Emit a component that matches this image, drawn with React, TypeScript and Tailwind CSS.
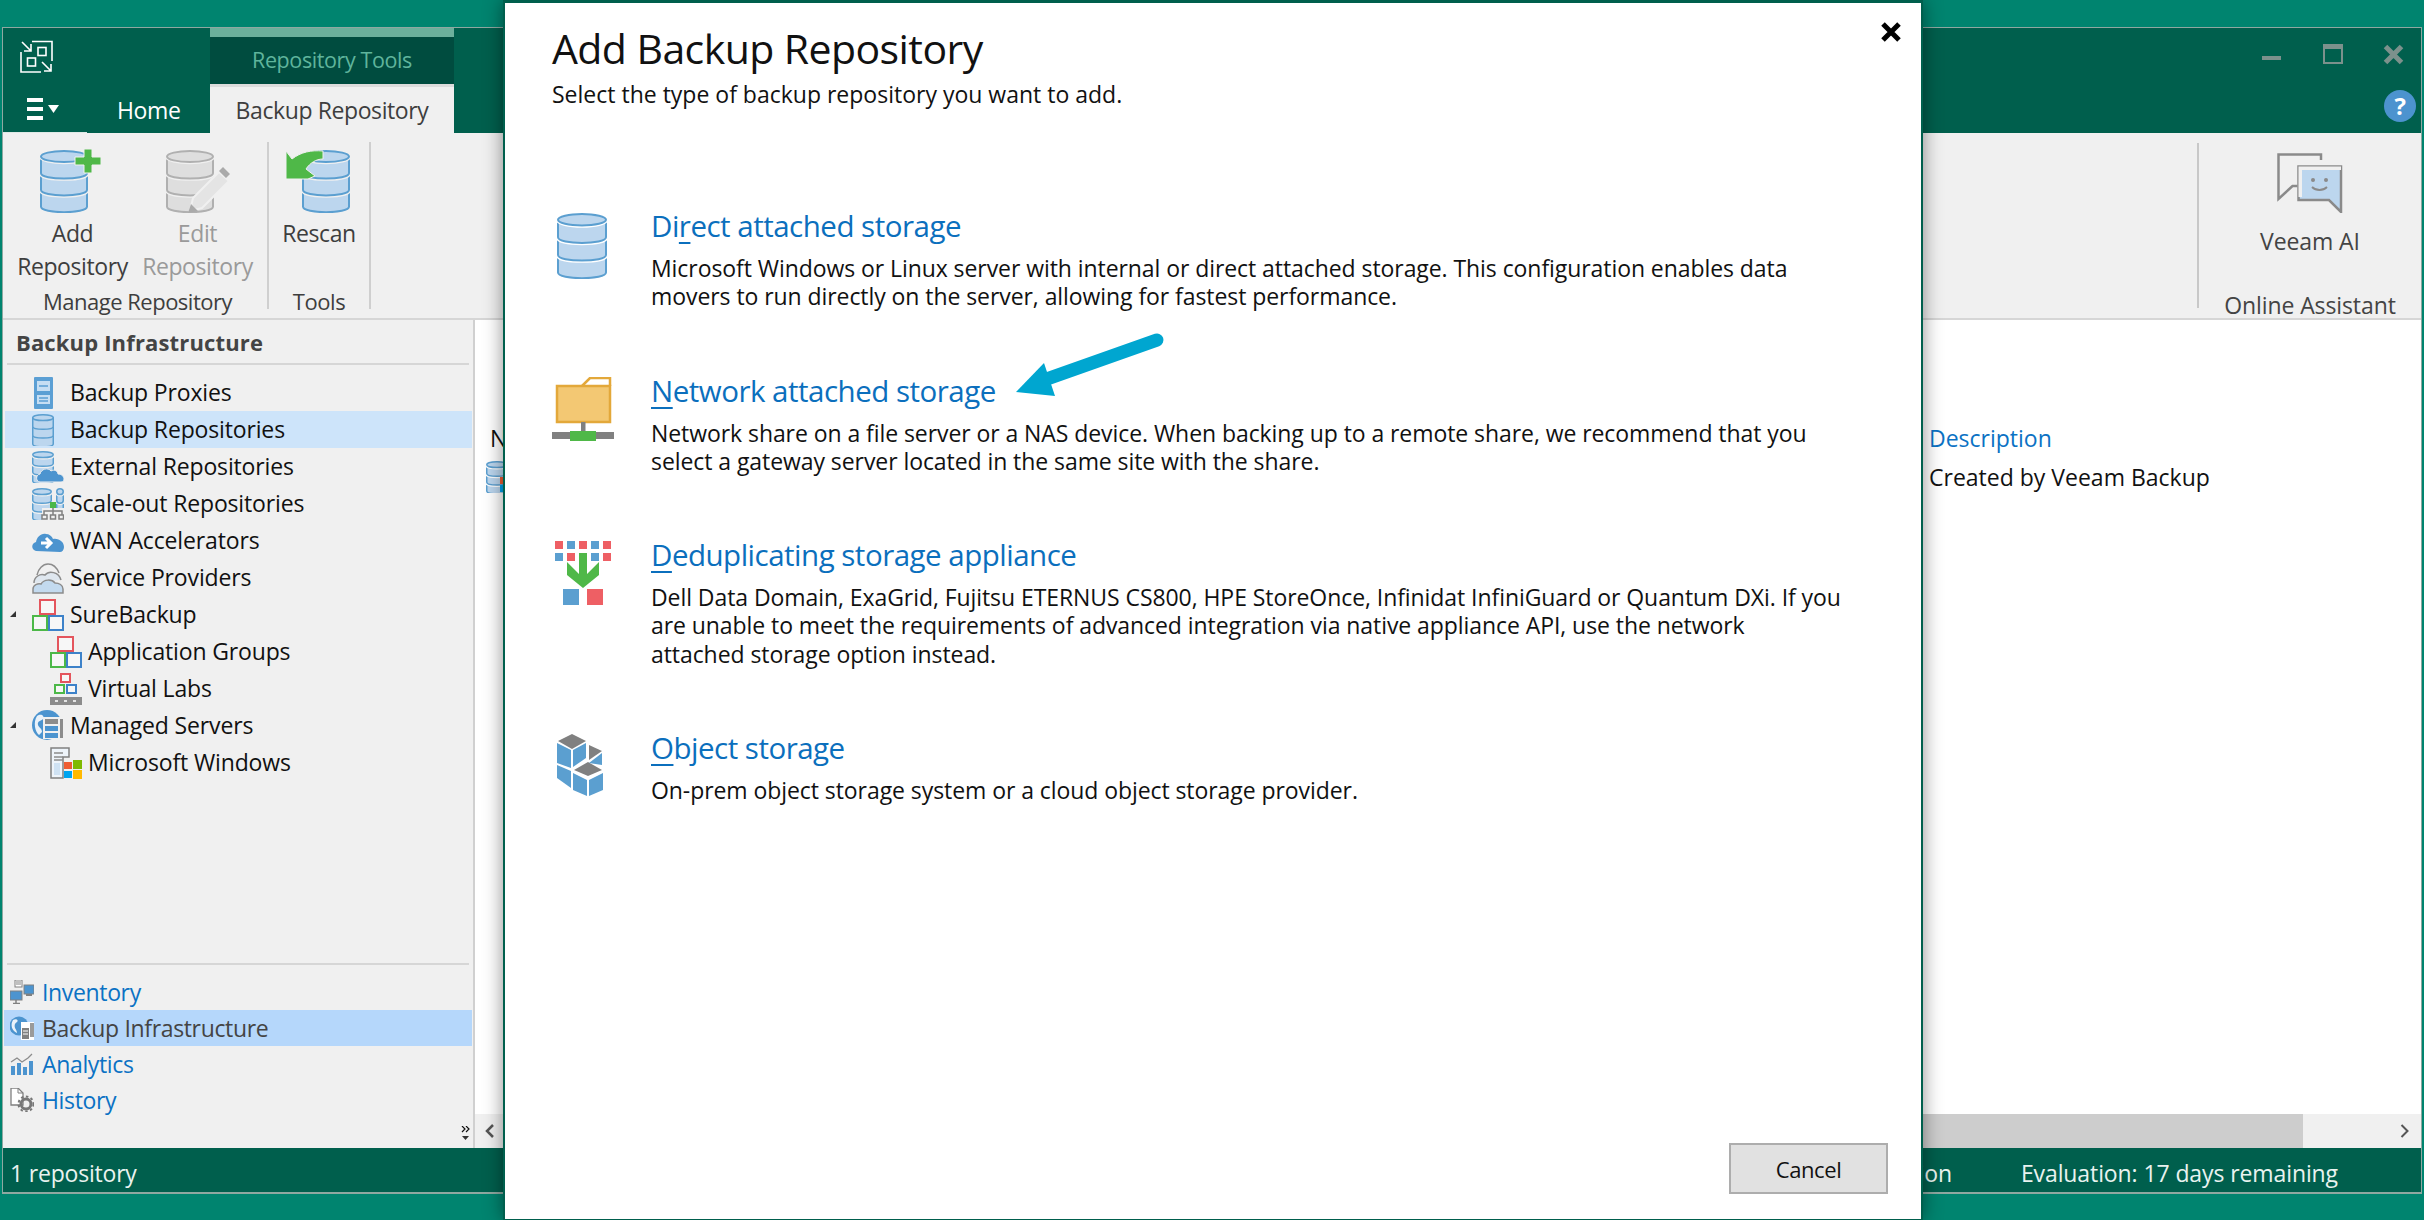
import React from "react";

const DB = "#5b9fd0";
const DBF = "#bcd6ee";

function Stack({ fill = DBF, stroke = DB, x = 0, y = 0, w = 48, h = 60, bg = "#f0f0f0" }: { fill?: string; stroke?: string; x?: number; y?: number; w?: number; h?: number; bg?: string }) {
  const sw = w > 30 ? 2 : 1.5;
  const seg = h * 0.275;
  const ry = h * 0.09;
  const top = y + ry + sw / 2;
  return (
    <g fill={fill}>
      {[2, 1, 0].map((i) => {
        const y1 = top + i * seg;
        const d = `M${x + sw / 2} ${y1}v${seg}c0 ${ry * 1.3} ${w - sw} ${ry * 1.3} ${w - sw} 0v-${seg}z`;
        return (
          <g key={i}>
            <path d={d} stroke={bg} strokeWidth={sw + 2.5} />
            <path d={d} stroke={stroke} strokeWidth={sw} />
          </g>
        );
      })}
      <ellipse cx={x + w / 2} cy={top} rx={w / 2 - sw / 2} ry={ry} stroke={bg} strokeWidth={sw + 2.5} />
      <ellipse cx={x + w / 2} cy={top} rx={w / 2 - sw / 2} ry={ry} stroke={stroke} strokeWidth={sw} />
    </g>
  );
}

function Blocks() {
  return (
    <g fill="#f7f7f7" strokeWidth="2">
      <rect x="8" y="1" width="15" height="14" stroke="#e4555d" />
      <rect x="1" y="17" width="14" height="14" stroke="#4cb848" />
      <rect x="17" y="17" width="14" height="14" stroke="#3d82c9" />
    </g>
  );
}

function TreeIcon({ name }: { name: string }) {
  const box = { width: 32, height: 32, viewBox: "0 0 32 32" };
  switch (name) {
    case "proxy":
      return (
        <svg {...box}>
          <rect x="2" y="0" width="19" height="32" rx="1" fill="#5b9fd4" />
          <rect x="5" y="4" width="13" height="10" fill="#c6def3" />
          <rect x="5" y="18" width="13" height="9" fill="#c6def3" />
          <path d="M7 9h9M7 21h9M7 24h9" stroke="#5b9fd4" strokeWidth="1.5" />
        </svg>
      );
    case "repo":
      return (
        <svg {...box}>
          <Stack x={0} y={0} w={22} h={32} bg="transparent" />
        </svg>
      );
    case "external":
      return (
        <svg {...box}>
          <Stack x={0} y={0} w={22} h={32} />
          <path d="M8 31c-4 0-5-7 0-8 1-5 8-7 11-3 3-2 7 0 7 3 4 0 6 3 6 5 0 2-1 3-3 3z" fill="#4c94cf" stroke="#f0f0f0" strokeWidth="1" />
        </svg>
      );
    case "scale":
      return (
        <svg {...box}>
          <Stack x={0} y={0} w={20} h={32} />
          <Stack x={24} y={0} w={8} h={32} />
          <rect x="10" y="20" width="22" height="12" fill="#f0f0f0" />
          <rect x="18" y="14" width="6" height="6" fill="#4cb848" />
          <path d="M21 20v3M12 27v-4h18v4M21 23v4" fill="none" stroke="#808080" strokeWidth="1.5" />
          <g fill="#f0f0f0" stroke="#808080" strokeWidth="1.5">
            <rect x="10" y="27" width="5" height="4" />
            <rect x="18.5" y="27" width="5" height="4" />
            <rect x="27" y="27" width="4.5" height="4" />
          </g>
        </svg>
      );
    case "wan":
      return (
        <svg {...box}>
          <path d="M4 26c-5-1-5-8 0-9 1-5 5-9 10-8 3 0 6 2 7 5 6-1 11 3 11 8 0 3-2 5-4 5z" fill="#4c94cf" />
          <path d="M9 18h9M14 13l5 5-5 5" fill="none" stroke="#fff" strokeWidth="3" />
        </svg>
      );
    case "service":
      return (
        <svg {...box}>
          <path d="M5 13c1-6 6-11 11-11 5 0 9 4 11 9" fill="none" stroke="#8c8c8c" strokeWidth="1.5" />
          <path d="M2 21c0-6 6-10 11-8 4-5 14-3 16 5" fill="#dfe7ef" stroke="#8c8c8c" strokeWidth="1.5" />
          <path d="M1 31v-4c0-4 5-6 8-5 3-5 11-5 14-1 4 0 8 2 8 6v4z" fill="#c3daef" stroke="#8c8c8c" strokeWidth="1.5" />
        </svg>
      );
    case "sure":
      return (
        <svg {...box}>
          <Blocks />
        </svg>
      );
    case "labs":
      return (
        <svg {...box}>
          <g fill="#f7f7f7" strokeWidth="2">
            <rect x="11" y="1" width="9" height="8" stroke="#e4555d" />
            <rect x="5" y="12" width="9" height="8" stroke="#4cb848" />
            <rect x="17" y="12" width="9" height="8" stroke="#3d82c9" />
          </g>
          <rect x="0" y="24" width="32" height="8" fill="#8c8c8c" />
          <path d="M5 28h3M14 28h3M23 28h3" stroke="#e4e4e4" strokeWidth="2" />
        </svg>
      );
    case "managed":
      return (
        <svg {...box}>
          <circle cx="15" cy="15" r="15" fill="#4c94cf" />
          <path d="M5 6c4-3 8 0 6 3-2 2-6 2-5 6 1 3 4 3 4 7l-3 3C3 22 1 12 5 6z" fill="#e9f2fa" />
          <rect x="11" y="7" width="21" height="22" fill="#f0f0f0" />
          <rect x="13" y="9" width="13" height="5" fill="#8c8c8c" />
          <rect x="13" y="16" width="13" height="5" fill="#4c94cf" />
          <rect x="13" y="23" width="13" height="5" fill="#4c94cf" />
          <rect x="28" y="9" width="3" height="19" fill="#8c8c8c" />
        </svg>
      );
    default:
      return (
        <svg {...box}>
          <path d="M1 1h18l0 9h-6v21H1z" fill="#eef4fa" stroke="#808080" strokeWidth="1.5" />
          <path d="M4 6h9M4 10h9M4 13h9" stroke="#8c8c8c" strokeWidth="1.5" />
          <rect x="4" y="16" width="6" height="12" fill="#cfe2f3" />
          <rect x="14" y="15" width="8" height="7" fill="#ee5c32" />
          <rect x="23" y="13" width="9" height="9" fill="#7fba00" />
          <rect x="14" y="24" width="8" height="7" fill="#00a4ef" />
          <rect x="23" y="23" width="9" height="9" fill="#ffb900" />
        </svg>
      );
  }
}

function NavIcon({ name }: { name: string }) {
  const box = { width: 24, height: 24, viewBox: "0 0 24 24" };
  if (name === "Inventory")
    return (
      <svg {...box}>
        <rect x="5" y="0" width="7" height="7" fill="#fff" stroke="#808080" />
        <path d="M6 2h5M6 4h5" stroke="#808080" />
        <rect x="14" y="5" width="10" height="9" fill="#4c94cf" stroke="#808080" />
        <path d="M16 15h6" stroke="#808080" strokeWidth="2" />
        <rect x="0" y="11" width="12" height="9" fill="#4c94cf" stroke="#808080" />
        <path d="M6 20v3M3 23.5h7" stroke="#808080" strokeWidth="1.5" />
      </svg>
    );
  if (name === "Backup Infrastructure")
    return (
      <svg {...box}>
        <circle cx="9" cy="10" r="9.5" fill="#4c94cf" />
        <path d="M3 4c3-2 6 0 4 2-2 1-3 3-2 6 1 2 2 3 2 5C2 15 0 9 3 4z" fill="#e9f2fa" />
        <rect x="11" y="6" width="13" height="18" fill="#fff" />
        <rect x="12" y="12" width="7" height="11" fill="#808080" />
        <rect x="20" y="7" width="4" height="14" fill="#9a9a9a" />
        <path d="M13 15h5M13 18h5" stroke="#fff" />
      </svg>
    );
  if (name === "Analytics")
    return (
      <svg {...box}>
        <path d="M1 10l6-4 5 4 6-4 4-4" fill="none" stroke="#8c8c8c" strokeWidth="1.3" />
        <rect x="1" y="14" width="4" height="9" fill="#4c94cf" />
        <rect x="7" y="11" width="4" height="12" fill="#4c94cf" />
        <rect x="13" y="15" width="4" height="8" fill="#4c94cf" />
        <rect x="19" y="9" width="4" height="14" fill="#4c94cf" />
      </svg>
    );
  return (
    <svg {...box}>
      <path d="M1 0h7l5 5v12H1z" fill="#fff" stroke="#808080" strokeWidth="1.3" />
      <path d="M8 0v5h5" fill="none" stroke="#808080" />
      <circle cx="16" cy="16" r="5" fill="none" stroke="#777" strokeWidth="3" />
      <circle cx="16" cy="16" r="7.5" fill="none" stroke="#777" strokeWidth="2" strokeDasharray="2.5 2.5" />
    </svg>
  );
}

const tree = [
  { label: "Backup Proxies", icon: "proxy" },
  { label: "Backup Repositories", icon: "repo", active: true },
  { label: "External Repositories", icon: "external" },
  { label: "Scale-out Repositories", icon: "scale" },
  { label: "WAN Accelerators", icon: "wan" },
  { label: "Service Providers", icon: "service" },
  { label: "SureBackup", icon: "sure", open: true },
  { label: "Application Groups", icon: "sure", child: true },
  { label: "Virtual Labs", icon: "labs", child: true },
  { label: "Managed Servers", icon: "managed", open: true },
  { label: "Microsoft Windows", icon: "windows", child: true },
];

const nav = ["Inventory", "Backup Infrastructure", "Analytics", "History"];

function Option({ icon, title, lines }: { icon: React.ReactNode; title: React.ReactNode; lines: string[] }) {
  return (
    <div className="flex">
      <div className="w-[99px] shrink-0 pt-[6px]">{icon}</div>
      <div className="min-w-0">
        <div className="h-[40px] text-[29.5px] leading-[40px] tracking-[-0.5px] text-[#0b6fbd] whitespace-nowrap">{title}</div>
        <div className="mt-[8px] text-[23px] leading-[28.3px] tracking-[-0.07px] text-[#111] whitespace-nowrap">
          {lines.map((l) => (
            <div key={l}>{l}</div>
          ))}
        </div>
      </div>
    </div>
  );
}

function RibbonButton({ top, bottom, icon, dim }: { top: string; bottom?: string; icon: React.ReactNode; dim?: boolean }) {
  return (
    <div className={`w-[125px] flex flex-col items-center text-[23px] leading-[32.5px] tracking-[-0.4px] ${dim ? "text-[#9a9a9a]" : "text-[#3e3e3e]"}`}>
      <div className="h-[68px] w-full flex justify-center">{icon}</div>
      <div>{top}</div>
      {bottom && <div>{bottom}</div>}
    </div>
  );
}

export default function App() {
  return (
    <div className="relative w-[2424px] h-[1220px] overflow-hidden bg-[#00846f] pt-[27px] px-[2px] font-['Open_Sans',sans-serif]">
      {/* main window */}
      <div className="h-[1167px] border border-[#8fa8a1] border-b-2 flex flex-col bg-[#005f4d]">
        {/* title bar */}
        <div className="h-[105px] shrink-0 flex text-[23px] tracking-[-0.4px]">
          <div className="w-[207px] flex flex-col">
            <div className="h-[57px] pl-[17px] pt-[12px]">
              <svg width="33" height="33" viewBox="0 0 33 33" fill="none" stroke="#fff" strokeWidth="1.6">
                <path d="M12 1.5h20V21M1 12v20h20" />
                <path d="M2 2l9 9M11 4v7H4M22 22l9 9M31 24v7h-7" />
                <rect x="18" y="7.500" width="8" height="8" />
                <rect x="7.500" y="18" width="8" height="8" />
              </svg>
            </div>
            <div className="flex-1 flex items-center">
              <div className="w-[84px] h-full border-b border-[#dfe9e6] flex items-center pl-[24px] gap-[5px]">
                <div className="flex flex-col gap-[5px] w-[16px]">
                  <div className="h-[4px] bg-white" />
                  <div className="h-[4px] bg-white" />
                  <div className="h-[4px] bg-white" />
                </div>
                <svg width="11" height="8" viewBox="0 0 11 8">
                  <path d="M0 0h11L5.500 8z" fill="#fff" />
                </svg>
              </div>
              <div className="pl-[30px] text-white pt-[2px]">Home</div>
            </div>
          </div>
          <div className="w-[244px] flex flex-col">
            <div className="h-[9px] bg-[#6bb09c]" />
            <div className="h-[47px] bg-[#004c3f] flex items-center justify-center text-[#5fb49c] text-[21.5px]">Repository Tools</div>
            <div className="flex-1 bg-[#f0f0f0] border-t-[3px] border-[#dcdcdc] flex items-center justify-center text-[#3e3e3e]">Backup Repository</div>
          </div>
          <div className="flex-1 flex flex-col items-end pr-[5px]">
            <div className="h-[62px] flex items-start pt-[16px] pr-[12px] gap-[40px]">
              <div className="w-[19px] h-[4px] bg-[#7c918c] mt-[12px]" />
              <div className="w-[20px] h-[20px] border-2 border-t-[5px] border-[#7c918c] ml-[2px]" />
              <svg width="21" height="21" viewBox="0 0 21 21">
                <path d="M2.500 2.500l16 16M18.500 2.500l-16 16" stroke="#7c918c" strokeWidth="5" />
              </svg>
            </div>
            <div className="w-[32px] h-[32px] rounded-full bg-[#4c93cf] flex items-center justify-center text-white text-[24px] font-bold">?</div>
          </div>
        </div>
        {/* ribbon */}
        <div className="h-[187px] shrink-0 bg-[#f0f0f0] border-b-2 border-[#d6d6d6] flex">
          <div className="w-[264px] pl-[7px] pt-[16px] flex flex-col">
            <div className="flex">
              <RibbonButton
                top="Add"
                bottom="Repository"
                icon={
                  <svg width="62" height="64" viewBox="0 0 62 64" className="-ml-[4px]">
                    <Stack x={0} y={1} w={48} h={61} />
                    <path d="M44 0h8v8h9v8h-9v8h-8v-8H35V8h9z" fill="#4fb848" stroke="#f0f0f0" strokeWidth="1" />
                  </svg>
                }
              />
              <RibbonButton
                dim
                top="Edit"
                bottom="Repository"
                icon={
                  <svg width="64" height="64" viewBox="0 0 64 64">
                    <Stack fill="#dedede" stroke="#b0b0b0" x={0} y={1} w={48} h={61} />
                    <path d="M24 62l3-13 26-26 10 9-27 27z" fill="#e4e4e4" stroke="#f0f0f0" strokeWidth="2" />
                    <path d="M22 64l3-9 7 7zM53 22l4-4 7 7-4 4z" fill="#aaa" />
                  </svg>
                }
              />
            </div>
            <div className="h-[36px] pt-[4px] pr-[2px] text-center text-[22px] leading-[30px] tracking-[-0.5px] text-[#3e3e3e]">Manage Repository</div>
          </div>
          <div className="w-[2px] my-[9px] bg-[#cfcfcf]" />
          <div className="w-[100px] pt-[16px] flex flex-col items-center">
            <div className="h-[68px] w-full flex justify-center">
              <svg width="66" height="64" viewBox="0 0 66 64">
                <Stack x={16} y={1} w={48} h={61} />
                <path d="M0 2l6 8c9-7 19-9 31-8v8c-7 0-13 4-17 10l9 7-7 3H0z" fill="#4fb848" stroke="#f0f0f0" strokeWidth="1" />
              </svg>
            </div>
            <div className="h-[33px] leading-[33px] text-[23px] tracking-[-0.4px] text-[#3e3e3e]">Rescan</div>
            <div className="flex-1" />
            <div className="h-[33px] pt-[1px] leading-[30px] text-[22px] tracking-[-0.4px] text-[#3e3e3e]">Tools</div>
          </div>
          <div className="w-[2px] my-[9px] bg-[#cfcfcf]" />
          <div className="flex-1" />
          <div className="w-[2px] my-[10px] bg-[#c8c8c8]" />
          <div className="w-[222px] flex flex-col items-center text-[#444] text-[23px] tracking-[-0.1px]">
            <div className="pt-[20px] h-[85px]">
              <svg width="66" height="60" viewBox="0 0 66 60" fill="none">
                <path d="M44 7V1.500H1.500V46l14-13h5" stroke="#8a8a8a" strokeWidth="2.500" />
                <path d="M21.500 13.500h42.500V59L52 47H21.500z" fill="#bcd6ee" stroke="#8a8a8a" strokeWidth="2.500" />
                <path d="M21.500 13.500h42.500v3.500H25V44h-3.500z" fill="#f0f0f0" />
                <circle cx="36" cy="27" r="2" fill="#8a8a8a" />
                <circle cx="49" cy="27" r="2" fill="#8a8a8a" />
                <path d="M35 34c4 4 11 4 15 0" stroke="#8a8a8a" strokeWidth="1.800" />
              </svg>
            </div>
            <div className="h-[46px] leading-[46px]">Veeam AI</div>
            <div className="flex-1 flex items-end leading-[26px]">Online Assistant</div>
          </div>
        </div>
        {/* middle */}
        <div className="flex-1 flex min-h-0">
          <div className="w-[472px] shrink-0 bg-[#f0f0f0] border-r-2 border-[#d0d0d0] flex flex-col">
            <div className="h-[45px] mx-[4px] border-b-2 border-[#d6d6d6] pl-[9px] pt-[2px] flex items-center font-bold text-[22px] tracking-[0.15px] text-[#444]">Backup Infrastructure</div>
            <div className="flex-1 pt-[9px] pl-[2px] pr-[1px]">
              {tree.map((t) => (
                <div key={t.label} className={`h-[37px] flex items-center text-[23px] tracking-[-0.15px] text-[#111] whitespace-nowrap ${t.active ? "bg-[#cde4fa]" : ""}`}>
                  <div className="w-[27px] shrink-0 pl-[5px]">
                    {t.open && (
                      <svg width="7" height="7" viewBox="0 0 7 7" className="block">
                        <path d="M6 0v6H0z" fill="#333" />
                      </svg>
                    )}
                  </div>
                  <div className={`shrink-0 ${t.child ? "ml-[18px]" : ""}`}>
                    <TreeIcon name={t.icon} />
                  </div>
                  <div className="pl-[6px]">{t.label}</div>
                </div>
              ))}
            </div>
            <div className="mx-[4px] h-[2px] bg-[#d6d6d6]" />
            <div className="pt-[9px] pl-[1px] pr-[1px]">
              {nav.map((n) => (
                <div key={n} className={`h-[36px] pl-[6px] flex items-center gap-[8px] text-[23px] tracking-[-0.35px] ${n === "Backup Infrastructure" ? "bg-[#b5d7fb] text-[#444]" : "text-[#0b72c4]"}`}>
                  <NavIcon name={n} />
                  <span>{n}</span>
                </div>
              ))}
            </div>
            <div className="h-[30px] flex justify-end items-center pr-[3px]">
              <svg width="9" height="14" viewBox="0 0 9 14" fill="none">
                <path d="M1 0l3 3-3 3M5 0l3 3-3 3" stroke="#111" strokeWidth="1.2" />
                <path d="M1 10h7l-3.500 4z" fill="#333" />
              </svg>
            </div>
          </div>
          <div className="flex-1 min-w-0 bg-white flex flex-col">
            <div className="flex-1 pt-[99px] grid grid-cols-[1442px_1fr] grid-rows-[39px_39px] content-start text-[23px] tracking-[0px]">
              <div className="pl-[15px] leading-[39px] text-[#111]">Name</div>
              <div className="pl-[12px] leading-[39px] text-[#0b72c4]">Description</div>
              <div className="pl-[11px] pt-[3px]">
                <svg width="32" height="32" viewBox="0 0 32 32">
                  <Stack x={0} y={0} w={22} h={32} bg="#fff" />
                  <rect x="14" y="16" width="7" height="7" fill="#ee5c32" />
                  <rect x="14" y="24" width="7" height="7" fill="#00a4ef" />
                </svg>
              </div>
              <div className="pl-[12px] leading-[39px] text-[#111]">Created by Veeam Backup</div>
            </div>
            <div className="h-[34px] shrink-0 flex bg-[#f0f0f0]">
              <div className="w-[29px] flex items-center justify-center">
                <svg width="10" height="14" viewBox="0 0 10 14" fill="none">
                  <path d="M8 1L2 7l6 6" stroke="#555" strokeWidth="2.500" />
                </svg>
              </div>
              <div className="w-[1799px] bg-[#cdcdcd]" />
              <div className="flex-1 flex items-center justify-end pr-[12px]">
                <svg width="9" height="14" viewBox="0 0 9 14" fill="none">
                  <path d="M1.500 1l6 6-6 6" stroke="#555" strokeWidth="2" />
                </svg>
              </div>
            </div>
          </div>
        </div>
        {/* status */}
        <div className="h-[44px] shrink-0 flex items-center pt-[7px] text-[23px] tracking-[-0.1px] text-[#e9f3f0] pl-[7px] pr-[83px] whitespace-nowrap">
          <span className="tracking-[-0.2px]">1 repository</span>
          <span className="ml-auto">ion</span>
          <span className="ml-[69px]">Evaluation: 17 days remaining</span>
        </div>
      </div>

      {/* modal dialog */}
      <div className="absolute left-[503px] top-0 w-[1420px] h-[1220px] bg-white border-x-2 border-t-[3px] border-b-[1px] border-[#005f4d] shadow-[0_0_18px_rgba(0,0,0,0.45)] flex flex-col pl-[47px] pt-[17px]">
        <div className="text-[41px] leading-[56px] tracking-[-0.57px] text-[#111] whitespace-nowrap">Add Backup Repository</div>
        <div className="mt-[2px] text-[23px] leading-[32px] text-[#111] whitespace-nowrap">Select the type of backup repository you want to add.</div>
        <div className="mt-[96px] flex flex-col">
          <Option
            icon={
              <svg width="52" height="66" viewBox="0 0 52 66" className="ml-[4px] mt-[1px]">
                <Stack x={1} y={0} w={50} h={64} bg="#fff" />
              </svg>
            }
            title={<>Di<u className="underline underline-offset-[5px]">r</u>ect attached storage</>}
            lines={[
              "Microsoft Windows or Linux server with internal or direct attached storage. This configuration enables data",
              "movers to run directly on the server, allowing for fastest performance.",
            ]}
          />
          <div className="h-[60px]" />
          <Option
            icon={
              <svg width="62" height="64" viewBox="0 0 62 64">
                <path d="M30 9l8-8h20v8" fill="none" stroke="#e3a83a" strokeWidth="2.500" />
                <path d="M5 9h53v36H5z" fill="#f3c873" stroke="#e3a83a" strokeWidth="2.500" />
                <rect x="29" y="45" width="4.500" height="10" fill="#808080" />
                <rect x="0" y="55" width="62" height="7" fill="#808080" />
                <rect x="18" y="54" width="26" height="10" fill="#4fb848" />
              </svg>
            }
            title={<><u className="underline underline-offset-[5px]">N</u>etwork attached storage</>}
            lines={[
              "Network share on a file server or a NAS device. When backing up to a remote share, we recommend that you",
              "select a gateway server located in the same site with the share.",
            ]}
          />
          <div className="h-[60px]" />
          <Option
            icon={
              <svg width="58" height="64" viewBox="0 0 58 64" className="ml-[3px]">
                {[0, 12, 24, 36, 48].map((x, i) => (
                  <rect key={x} x={x} y="0" width="8" height="8" fill={i % 2 ? "#5b9fd0" : "#ee5f64"} />
                ))}
                {[0, 12, 36, 48].map((x, i) => (
                  <rect key={x} x={x} y="12" width="8" height="8" fill={i % 2 ? "#ee5f64" : "#5b9fd0"} />
                ))}
                <path d="M12 21l12 12V12h8v21l12-12v13L28 47 12 34z" fill="#4fb848" />
                <rect x="8" y="48" width="16" height="16" fill="#5b9fd0" />
                <rect x="32" y="48" width="16" height="16" fill="#ee5f64" />
              </svg>
            }
            title={<><u className="underline underline-offset-[5px]">D</u>eduplicating storage appliance</>}
            lines={[
              "Dell Data Domain, ExaGrid, Fujitsu ETERNUS CS800, HPE StoreOnce, Infinidat InfiniGuard or Quantum DXi. If you",
              "are unable to meet the requirements of advanced integration via native appliance API, use the network",
              "attached storage option instead.",
            ]}
          />
          <div className="h-[60px]" />
          <Option
            icon={
              <svg width="48" height="64" viewBox="0 0 48 64" className="ml-[4px]">
                <path d="M16 0l14 7-14 8L2 7z" fill="#808080" />
                <path d="M33 11l13 6-13 9z" fill="#808080" />
                <path d="M18 36l14-8 14 8-14 6z" fill="#808080" />
                <path d="M1 9l14 7v18L1 29z" fill="#5b9fd0" />
                <path d="M17 16l13-7v15l-13 9z" fill="#5b9fd0" />
                <path d="M33 29l13-10v12z" fill="#5b9fd0" />
                <path d="M1 31l14 6v17L1 44z" fill="#5b9fd0" />
                <path d="M17 39l14 7v16l-14-6z" fill="#5b9fd0" />
                <path d="M33 46l14-7v17l-14 6z" fill="#5b9fd0" />
              </svg>
            }
            title={<><u className="underline underline-offset-[5px]">O</u>bject storage</>}
            lines={["On-prem object storage system or a cloud object storage provider."]}
          />
        </div>
        <div className="mt-auto mb-[25px] mr-[33px] self-end w-[159px] h-[51px] pt-[2px] bg-[#e1e1e1] border-2 border-[#adadad] flex items-center justify-center text-[22px] tracking-[-0.4px] text-[#111]">Cancel</div>

        <svg width="22" height="22" viewBox="0 0 22 22" className="absolute right-[19px] top-[18px]">
          <path d="M3 3l16 16M19 3L3 19" stroke="#000" strokeWidth="5" />
        </svg>
        <svg width="160" height="70" viewBox="0 0 160 70" className="absolute left-[507px] top-[325px]">
          <path d="M4 64l28-29 11 33z" fill="#00a6d0" />
          <path d="M32 52L145 12" stroke="#00a6d0" strokeWidth="13" strokeLinecap="round" />
        </svg>
      </div>
    </div>
  );
}
